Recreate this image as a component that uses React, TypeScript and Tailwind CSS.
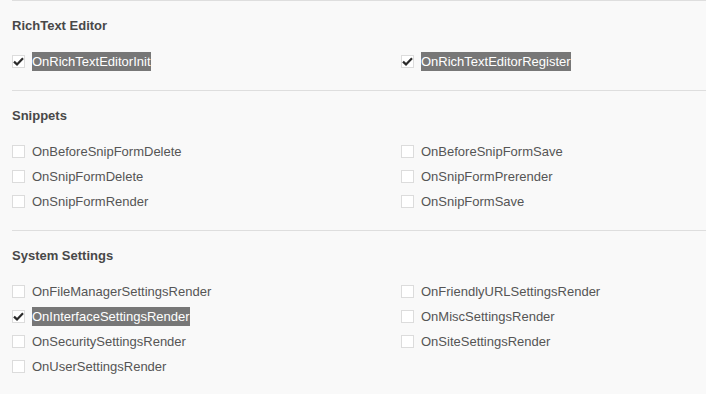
import React from "react"

interface Item {
  label: string
  checked?: boolean
}

interface Section {
  title: string
  items: Item[]
}

const sections: Section[] = [
  {
    title: "RichText Editor",
    items: [
      { label: "OnRichTextEditorInit", checked: true },
      { label: "OnRichTextEditorRegister", checked: true },
    ],
  },
  {
    title: "Snippets",
    items: [
      { label: "OnBeforeSnipFormDelete" },
      { label: "OnBeforeSnipFormSave" },
      { label: "OnSnipFormDelete" },
      { label: "OnSnipFormPrerender" },
      { label: "OnSnipFormRender" },
      { label: "OnSnipFormSave" },
    ],
  },
  {
    title: "System Settings",
    items: [
      { label: "OnFileManagerSettingsRender" },
      { label: "OnFriendlyURLSettingsRender" },
      { label: "OnInterfaceSettingsRender", checked: true },
      { label: "OnMiscSettingsRender" },
      { label: "OnSecuritySettingsRender" },
      { label: "OnSiteSettingsRender" },
      { label: "OnUserSettingsRender" },
    ],
  },
]

function CheckRow({ item }: { item: Item }) {
  return (
    <label className="flex items-center h-[25px] gap-[7px]">
      <span className="w-[13px] h-[13px] border border-[#dcdcdc] bg-white flex items-center justify-center shrink-0">
        {item.checked && (
          <svg width="11" height="9" viewBox="0 0 11 9" className="-mt-px">
            <path d="M1 4.6 L4 7.4 L10 1.2" fill="none" stroke="#2b2b2b" strokeWidth="2.2" />
          </svg>
        )}
      </span>
      {item.checked ? (
        <span className="bg-[#777777] text-white leading-[19px] inline-block">{item.label}</span>
      ) : (
        <span className="text-[#555555]">{item.label}</span>
      )}
    </label>
  )
}

export default function App() {
  return (
    <div className="min-h-screen bg-[#f9f9f9] text-[13px]" style={{ fontFamily: '"Liberation Sans", Arial, sans-serif' }}>
      <div className="ml-3">
        {sections.map((section) => (
          <div key={section.title} className="border-t border-[#dedede] pt-[15px] pb-4">
            <h3 className="h-5 leading-5 font-bold text-[#484848] mb-[13px]">{section.title}</h3>
            <div className="grid grid-cols-[389px_1fr]">
              {section.items.map((item) => (
                <CheckRow key={item.label} item={item} />
              ))}
            </div>
          </div>
        ))}
      </div>
    </div>
  )
}
